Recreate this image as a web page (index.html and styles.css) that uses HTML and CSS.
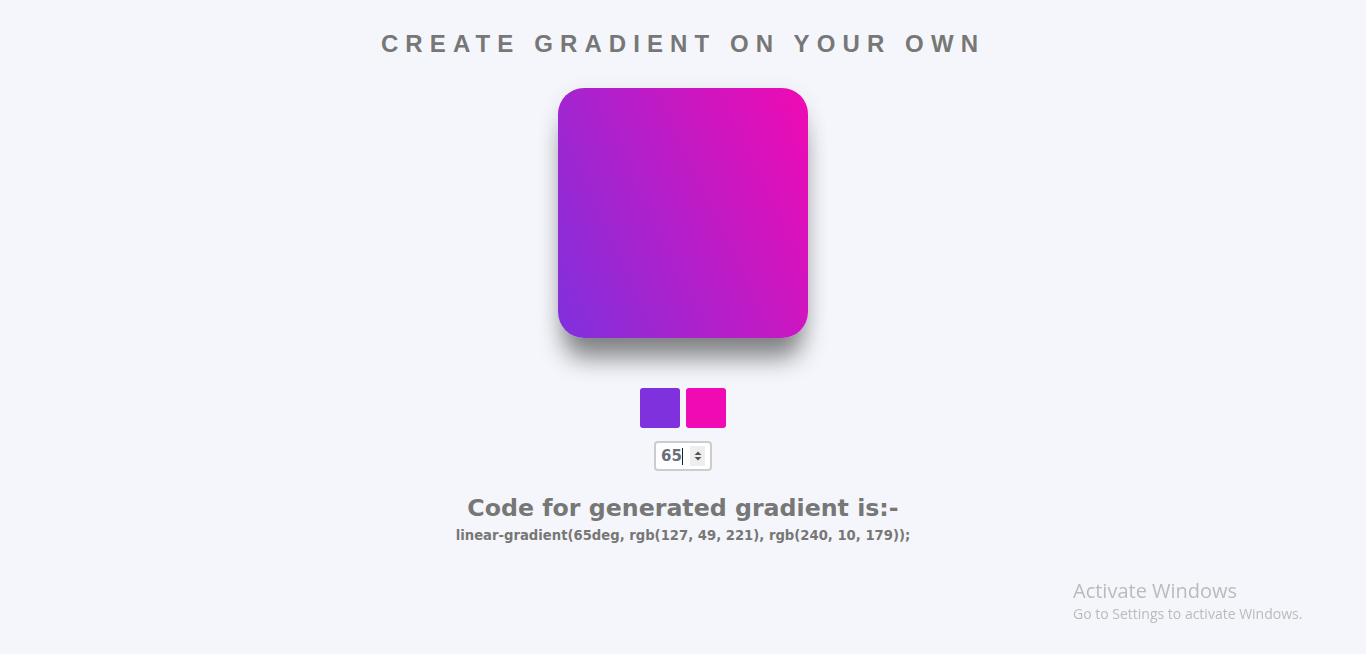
FILE: index.html
```html
<!DOCTYPE html>
<html lang="en">
<head>
    <meta charset="UTF-8">
    <meta name="viewport" content="width=device-width, initial-scale=1.0">
    <title>Gradient Generator</title>
    <link rel="stylesheet" href="styles.css">
</head>
<body>
    <div class="wrapper">
        <h1 class="title">CREATE GRADIENT ON YOUR OWN</h1>

        <div class="preview"></div>

        <div class="colors">
            <div class="swatch first"></div>
            <div class="swatch second"></div>
        </div>

        <div class="angle">
            <span class="angle-value">65</span><span class="caret"></span>
            <span class="spin">
                <svg width="10" height="14" viewBox="0 0 10 14">
                    <path d="M1.5 6 L5 2.5 L8.5 6 Z" fill="#555"/>
                    <path d="M1.5 8 L5 11.5 L8.5 8 Z" fill="#555"/>
                </svg>
            </span>
        </div>

        <h2 class="code-title">Code for generated gradient is:-</h2>
        <p class="code">linear-gradient(65deg, rgb(127, 49, 221), rgb(240, 10, 179));</p>
    </div>

    <div class="activate">
        <div class="activate-head">Activate Windows</div>
        <div class="activate-sub">Go to Settings to activate Windows.</div>
    </div>
</body>
</html>
```

FILE: styles.css
```css
*{
    box-sizing: border-box;
}
body{
    margin: 0;
    height: 654px;
    background-color: #f5f6fb;
    font-family: Verdana, "DejaVu Sans", sans-serif;
    color: #777;
    overflow: hidden;
}
.wrapper{
    display: flex;
    flex-direction: column;
    align-items: center;
    padding-top: 30px;
}
.title{
    margin: 0;
    font-family: Arial, "Liberation Sans", sans-serif;
    font-size: 24px;
    line-height: 28px;
    letter-spacing: 7.1px;
    color: #777;
}
.preview{
    width: 250px;
    height: 250px;
    margin-top: 30px;
    border-radius: 26px;
    background: linear-gradient(65deg, rgb(127, 49, 221), rgb(240, 10, 179));
    box-shadow: 0 26px 24px -6px rgba(0, 0, 0, 0.45), 0 4px 22px rgba(0, 0, 0, 0.08);
}
.colors{
    display: flex;
    gap: 6px;
    margin-top: 50px;
}
.swatch{
    width: 40px;
    height: 40px;
    border-radius: 3px;
}
.first{
    background-color: rgb(127, 49, 221);
}
.second{
    background-color: rgb(240, 10, 179);
}
.angle{
    display: flex;
    align-items: center;
    width: 58px;
    height: 30px;
    margin-top: 13px;
    padding: 0 5px 0 5px;
    border: 2px solid #ccc;
    border-radius: 4px;
    background-color: #fff;
}
.angle-value{
    font-size: 15px;
    font-weight: 600;
    color: #6a6f7a;
}
.caret{
    width: 1px;
    height: 17px;
    background-color: #222;
}
.spin{
    display: flex;
    align-items: center;
    justify-content: center;
    width: 15px;
    height: 20px;
    margin-left: auto;
    background-color: #eee;
}
.code-title{
    margin: 22px 0 0;
    font-size: 23.7px;
    line-height: 30px;
    color: #777;
}
.code{
    margin: 5px 0 0;
    font-size: 13.2px;
    font-weight: bold;
    line-height: 16px;
}
.activate{
    position: fixed;
    left: 1073px;
    top: 578px;
    font-family: "Segoe UI", "Open Sans", sans-serif;
    color: #bbb;
}
.activate-head{
    font-size: 20px;
    line-height: 26px;
}
.activate-sub{
    font-size: 14px;
    line-height: 20px;
}
```
